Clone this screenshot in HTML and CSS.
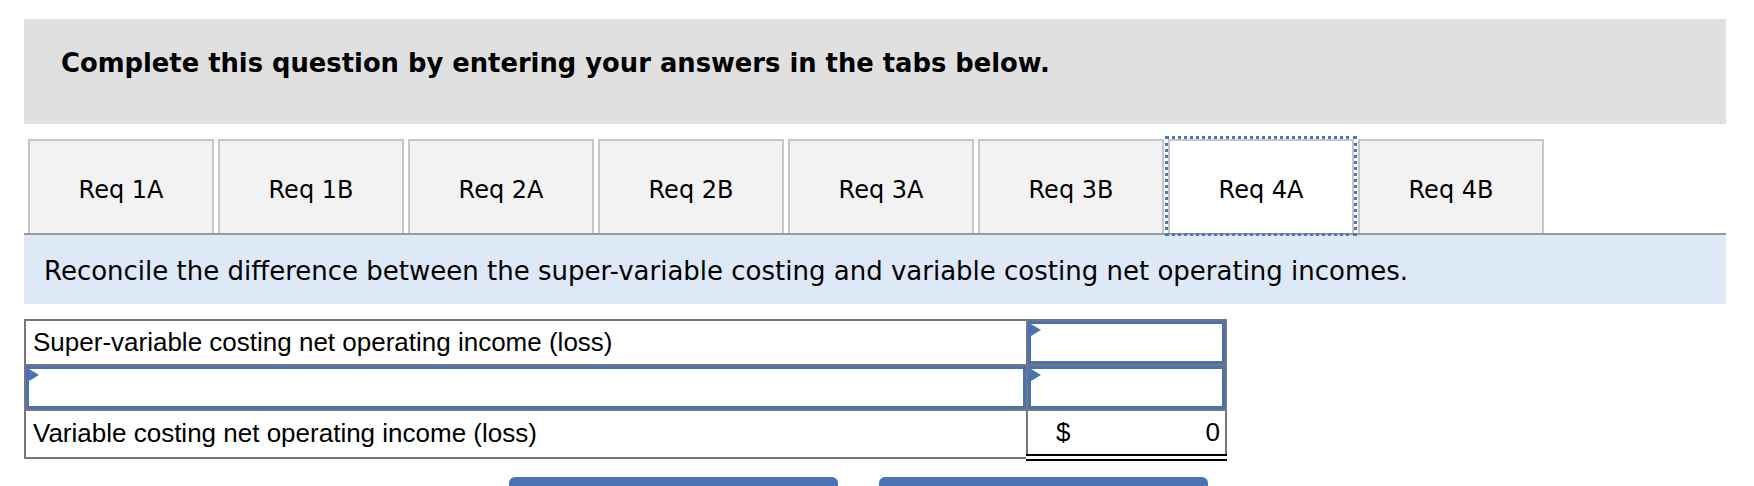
FILE: index.html
```html
<!DOCTYPE html>
<html>
<head>
<meta charset="utf-8">
<link rel="stylesheet" href="styles.css">
</head>
<body>
<div class="page">
  <div class="header">Complete this question by entering your answers in the tabs below.</div>
  <div class="tabs">
    <div class="tab">Req 1A</div>
    <div class="tab">Req 1B</div>
    <div class="tab">Req 2A</div>
    <div class="tab">Req 2B</div>
    <div class="tab">Req 3A</div>
    <div class="tab">Req 3B</div>
    <div class="tab active">Req 4A</div>
    <div class="tab">Req 4B</div>
  </div>
  <div class="band">Reconcile the difference between the super-variable costing and variable costing net operating incomes.</div>
  <table class="grid">
    <tr>
      <td class="label">Super-variable costing net operating income (loss)</td>
      <td class="value"><div class="input"></div></td>
    </tr>
    <tr>
      <td class="label inputcell"><div class="input"></div></td>
      <td class="value"><div class="input"></div></td>
    </tr>
    <tr>
      <td class="label">Variable costing net operating income (loss)</td>
      <td class="value total"><span>$</span><span>0</span></td>
    </tr>
  </table>
  <div class="nav">
    <button class="btn" aria-label="Previous: Req 3B"></button>
    <button class="btn" aria-label="Next: Req 4B"></button>
  </div>
</div>
</body>
</html>
```
FILE: styles.css
```css
html, body {
  margin: 0;
  padding: 0;
  background: #fff;
}
.page {
  padding: 19px 28px 0 24px;
  font-family: "DejaVu Sans", Verdana, sans-serif;
  color: #000;
}
.header {
  height: 105px;
  box-sizing: border-box;
  padding: 28px 37px 0;
  background: #e0e0e0;
  font-size: 25.8px;
  font-weight: bold;
  line-height: 32px;
}
.tabs {
  display: flex;
  gap: 4px;
  margin: 15px 0 0 4px;
  height: 94px;
}
.tab {
  width: 186px;
  box-sizing: border-box;
  border: 2px solid #c6c6c6;
  border-bottom: none;
  background: #f2f2f2;
  display: flex;
  align-items: center;
  justify-content: center;
  font-size: 24px;
  padding-top: 5px;
}
.tab.active {
  background: #fff;
  outline: 3px dotted #4a76c4;
  outline-offset: 0;
  position: relative;
  z-index: 1;
}
.band {
  height: 71px;
  box-sizing: border-box;
  border-top: 2px solid #9a9a9a;
  background: #dde9f6;
  padding: 3px 0 0 20px;
  display: flex;
  align-items: center;
  font-size: 26px;
}
.grid {
  margin-top: 15px;
  width: 1203px;
  border-collapse: collapse;
  font-family: "Liberation Sans", Arial, sans-serif;
  font-size: 26px;
}
.grid td {
  border: 2px solid #777;
  height: 43px;
  padding: 0;
}
.grid .label {
  padding-left: 7px;
}
.grid .label.inputcell {
  padding: 0;
}
.grid .value {
  width: 197px;
}
.input {
  height: 43px;
  box-sizing: border-box;
  border: 3px solid #4a72b2;
  position: relative;
}
.input::before {
  content: "";
  position: absolute;
  left: 0;
  top: 0;
  border-left: 10px solid #4a72b2;
  border-top: 6px solid transparent;
  border-bottom: 6px solid transparent;
}
.grid .total {
  border-bottom: 7px double #000;
}
.total span:first-child {
  float: left;
  padding-left: 28px;
}
.total span:last-child {
  float: right;
  padding-right: 5px;
}
.nav {
  display: flex;
  gap: 41px;
  margin: 16px 0 0 485px;
}
.btn {
  width: 329px;
  height: 50px;
  border: none;
  border-radius: 6px;
  background: #4a74b4;
  padding: 0;
}
```
